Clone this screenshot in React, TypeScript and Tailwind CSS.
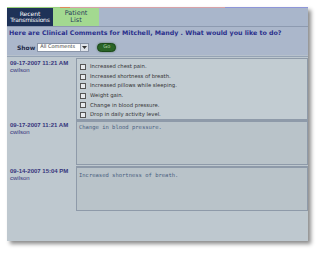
const symptoms = [
  "Increased chest pain.",
  "Increased shortness of breath.",
  "Increased pillows while sleeping.",
  "Weight gain.",
  "Change in blood pressure.",
  "Drop in daily activity level.",
];

const Stamp = ({ date }: { date: string }) => (
  <div className="w-[69px] shrink-0 pl-[3px] pt-[2px] leading-[7px] whitespace-nowrap font-['Liberation_Sans',sans-serif]">
    <div className="text-[6px] font-bold text-[#35347c]">{date}</div>
    <div className="text-[6px] text-[#35347c]">cwilson</div>
  </div>
);

export default function App() {
  return (
    <div className="w-[317px] h-[260px] bg-white pl-[7px] pt-[7px] font-['DejaVu_Sans',sans-serif]">
      <div className="w-[301px] h-[234px] bg-[#bec8cf] shadow-[3px_3px_4px_rgba(0,0,0,0.45)] flex flex-col">
        <div className="flex h-[1px] shrink-0">
          <div className="w-[53px] bg-[#9ad07c]" />
          <div className="w-[10px] bg-[#e08a5a]" />
          <div className="w-[155px] bg-[#d9a2a8]" />
          <div className="flex-1 bg-[#8f96d8]" />
        </div>
        <div className="flex h-[19px] shrink-0 bg-[#a9b6cb] border-b border-[#8d9ab0]">
          <div className="w-[46px] bg-[#1e3257] text-white text-[6px] leading-[6.5px] flex flex-col items-center justify-center text-center">
            <span>Recent</span>
            <span className="tracking-[-0.2px]">Transmissions</span>
          </div>
          <div className="w-[46px] bg-[#a3d990] text-[#283a5a] text-[6.5px] leading-[7px] flex flex-col items-center justify-center">
            <span>Patient</span>
            <span>List</span>
          </div>
        </div>
        <div className="bg-[#abb7cb] pl-[2px] pt-[2px] h-[10px] shrink-0 text-[6.3px] font-bold text-[#2a2f8c] whitespace-nowrap leading-[7px]">
          Here are Clinical Comments for Mitchell, Mandy . What would you like to do?
        </div>
        <div className="bg-[#abb7cb] h-[18px] shrink-0 flex items-center pl-[10px] pt-[2px] gap-[2px]">
          <span className="text-[6px] font-bold text-[#1f2a4a]">Show</span>
          <div className="w-[52px] h-[9px] bg-white border border-[#8a95a8] flex items-center justify-between pl-[2px]">
            <span className="text-[5px] text-[#333]">All Comments</span>
            <span className="w-[8px] h-full bg-[#dfe3ea] border-l border-[#9aa3b3] flex items-center justify-center">
              <svg width="5" height="3" viewBox="0 0 5 3"><path d="M0 0h5L2.5 3z" fill="#333" /></svg>
            </span>
          </div>
          <div className="ml-[6px] w-[19px] h-[9px] rounded-full bg-[#2a6427] border border-[#1c4a1a] shadow-[0_0_2px_rgba(20,60,20,0.6)] flex items-center justify-center text-[5px] text-[#b8d8b0]">
            Go
          </div>
        </div>
        <div className="h-[2px] shrink-0 bg-[#b7c1cc] border-b border-[#95a3b5]" />
        <div className="flex flex-col pt-[1px]">
          <div className="flex">
            <Stamp date="09-17-2007 11:21 AM" />
            <div className="flex-1 h-[62px] border border-[#8e9aa9] bg-[#c2ccd2] pl-[3px] pt-[4px] flex flex-col gap-[1.7px]">
              {symptoms.map((s) => (
                <div key={s} className="flex items-center gap-[4px] h-[8px]">
                  <span className="w-[6px] h-[6px] border border-[#555] bg-[#e6e9ec]" />
                  <span className="text-[5.3px] text-[#333]">{s}</span>
                </div>
              ))}
            </div>
          </div>
          <div className="flex">
            <Stamp date="09-17-2007 11:21 AM" />
            <div className="flex-1 h-[45px] border border-[#8e9aa9] border-t-[2px] bg-[#b9c3c9] pl-[2px] pt-[1px] text-[5.5px] font-['DejaVu_Sans_Mono',monospace] text-[#4a5f80]">
              Change in blood pressure.
            </div>
          </div>
          <div className="flex mt-[1px]">
            <Stamp date="09-14-2007 15:04 PM" />
            <div className="flex-1 h-[45px] border border-[#8e9aa9] border-t-[2px] bg-[#b9c3c9] pl-[2px] pt-[3px] text-[5.5px] font-['DejaVu_Sans_Mono',monospace] text-[#4a5f80]">
              Increased shortness of breath.
            </div>
          </div>
        </div>
      </div>
    </div>
  );
}
